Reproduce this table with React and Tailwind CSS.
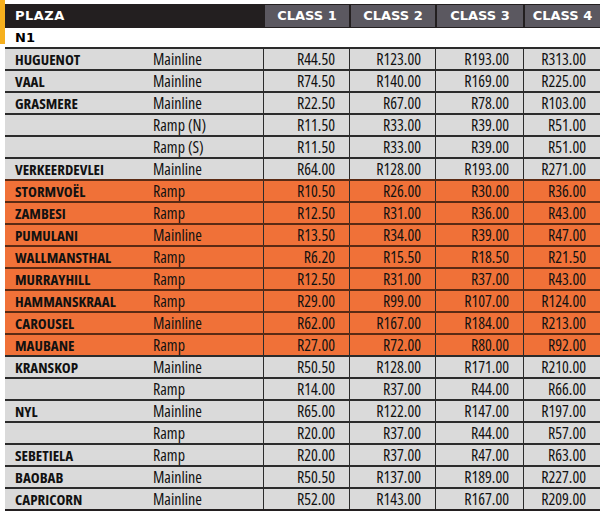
const rows = [
  ['HUGUENOT', 'Mainline', 'R44.50', 'R123.00', 'R193.00', 'R313.00', 0],
  ['VAAL', 'Mainline', 'R74.50', 'R140.00', 'R169.00', 'R225.00', 0],
  ['GRASMERE', 'Mainline', 'R22.50', 'R67.00', 'R78.00', 'R103.00', 0],
  ['', 'Ramp (N)', 'R11.50', 'R33.00', 'R39.00', 'R51.00', 0],
  ['', 'Ramp (S)', 'R11.50', 'R33.00', 'R39.00', 'R51.00', 0],
  ['VERKEERDEVLEI', 'Mainline', 'R64.00', 'R128.00', 'R193.00', 'R271.00', 0],
  ['STORMVOËL', 'Ramp', 'R10.50', 'R26.00', 'R30.00', 'R36.00', 1],
  ['ZAMBESI', 'Ramp', 'R12.50', 'R31.00', 'R36.00', 'R43.00', 1],
  ['PUMULANI', 'Mainline', 'R13.50', 'R34.00', 'R39.00', 'R47.00', 1],
  ['WALLMANSTHAL', 'Ramp', 'R6.20', 'R15.50', 'R18.50', 'R21.50', 1],
  ['MURRAYHILL', 'Ramp', 'R12.50', 'R31.00', 'R37.00', 'R43.00', 1],
  ['HAMMANSKRAAL', 'Ramp', 'R29.00', 'R99.00', 'R107.00', 'R124.00', 1],
  ['CAROUSEL', 'Mainline', 'R62.00', 'R167.00', 'R184.00', 'R213.00', 1],
  ['MAUBANE', 'Ramp', 'R27.00', 'R72.00', 'R80.00', 'R92.00', 1],
  ['KRANSKOP', 'Mainline', 'R50.50', 'R128.00', 'R171.00', 'R210.00', 0],
  ['', 'Ramp', 'R14.00', 'R37.00', 'R44.00', 'R66.00', 0],
  ['NYL', 'Mainline', 'R65.00', 'R122.00', 'R147.00', 'R197.00', 0],
  ['', 'Ramp', 'R20.00', 'R37.00', 'R44.00', 'R57.00', 0],
  ['SEBETIELA', 'Ramp', 'R20.00', 'R37.00', 'R47.00', 'R63.00', 0],
  ['BAOBAB', 'Mainline', 'R50.50', 'R137.00', 'R189.00', 'R227.00', 0],
  ['CAPRICORN', 'Mainline', 'R52.00', 'R143.00', 'R167.00', 'R209.00', 0],
];

const cols = 'grid grid-cols-[148px_110px_86px_86px_88px_77px]';
const narrow = "font-['Open_Sans',sans-serif] [font-stretch:75%]";
const heavy = "font-['DejaVu_Sans',sans-serif] font-extrabold";

export default function App() {
  return (
    <div className="relative h-[514px] w-[607px] overflow-hidden bg-white">
      <div className="absolute left-0 top-0 h-[44px] w-[5px] bg-[#f6b01e]" />
      <div className="ml-[5px] w-[595px] pt-[4px]">
        {/* header */}
        <div className={`${cols} h-[23px] border-t border-[#231f20] text-[13px] text-white ${heavy}`}>
          <div className="col-span-2 flex items-center bg-[#231f20] pl-[10px] tracking-[0.5px]">PLAZA</div>
          {['CLASS 1', 'CLASS 2', 'CLASS 3', 'CLASS 4'].map((c) => (
            <div key={c} className="flex items-center justify-center border-l-2 border-[#231f20] bg-[#5b5860]">
              {c}
            </div>
          ))}
        </div>
        <div className={`flex h-[20px] items-center border-t border-[#231f20] pl-[10px] text-[13px] text-black ${heavy}`}>
          N1
        </div>
        <div className={`border-b-2 border-[#231f20] ${narrow}`}>
          {rows.map((r, i) => (
            <div
              key={i}
              className={`${cols} h-[22px] border-t-2 text-[16px] leading-none text-[#111] ${
                r[6] ? 'border-[#5a2a14] bg-[#f07138]' : 'border-[#2b2b2b] bg-[#dadada]'
              }`}
            >
              <div className="flex items-center pl-[10px] text-[15px] font-bold">{r[0]}</div>
              <div className="flex items-center">{r[1]}</div>
              {r.slice(2, 6).map((p, j) => (
                <div key={j} className="flex items-center justify-end border-l border-[#2b2b2b] pr-[14px]">
                  {p}
                </div>
              ))}
            </div>
          ))}
        </div>
      </div>
    </div>
  );
}
